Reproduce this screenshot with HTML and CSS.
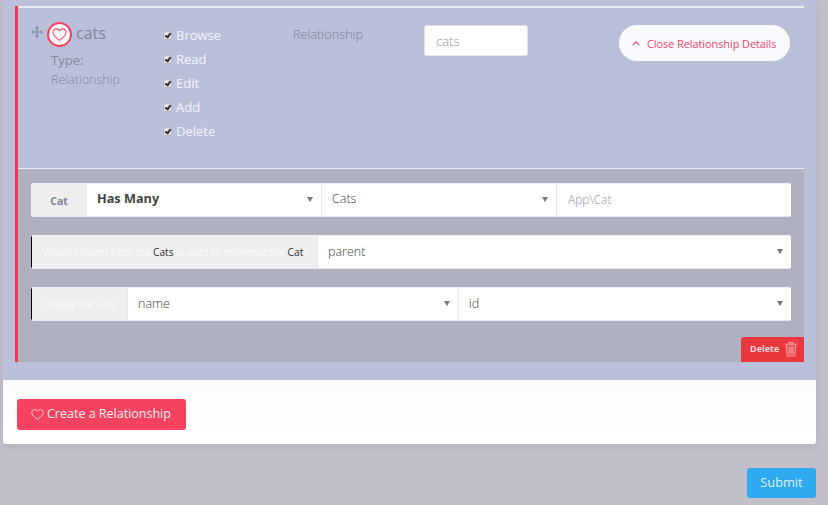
FILE: index.html
```html
<!DOCTYPE html>
<html lang="en">
<head>
    <meta charset="UTF-8">
    <title>Edit Relationship</title>
    <link rel="stylesheet" href="styles.css">
</head>
<body>
    <div class="panel">
        <div class="panel-body">
            <div class="relationship">
                <div class="details">
                    <div class="col-name">
                        <div class="name-line">
                            <svg class="move-icon" viewBox="0 0 12 12"><path d="M6 0L8.200 2.400H6.600V5.400H9.600V3.800L12 6 9.600 8.200V6.600H6.600V9.600H8.200L6 12 3.800 9.600H5.400V6.600H2.400V8.200L0 6 2.400 3.800V5.400H5.400V2.400H3.800Z"/></svg>
                            <span class="heart-badge">
                                <svg viewBox="0 0 16 16"><path d="M8 14.200C3.500 10.800 1 8.200 1 5.500 1 3.500 2.600 2 4.500 2 6 2 7.300 2.800 8 4.100 8.700 2.800 10 2 11.500 2 13.400 2 15 3.500 15 5.500c0 2.700-2.500 5.300-7 8.700z"/></svg>
                            </span>
                            <span class="name">cats</span>
                        </div>
                        <div class="type-label">Type:</div>
                        <div class="type-value">Relationship</div>
                    </div>
                    <div class="col-perms">
                        <div class="perm"><span class="check"></span>Browse</div>
                        <div class="perm"><span class="check"></span>Read</div>
                        <div class="perm"><span class="check"></span>Edit</div>
                        <div class="perm"><span class="check"></span>Add</div>
                        <div class="perm"><span class="check"></span>Delete</div>
                    </div>
                    <div class="col-type">Relationship</div>
                    <input class="col-input" type="text" placeholder="cats">
                    <button class="close-btn">
                        <svg viewBox="0 0 10 6"><path d="M1 5l4-4 4 4"/></svg>
                        Close Relationship Details
                    </button>
                </div>
                <div class="form-area">
                    <div class="input-row">
                        <span class="addon addon-cat">Cat</span>
                        <div class="select strong sel-has-many">Has Many</div>
                        <div class="select sel-cats">Cats</div>
                        <input class="model-input" type="text" placeholder="App\Cat">
                    </div>
                    <div class="input-row">
                        <span class="addon addon-long">Which column from the <b>Cats</b> is used to reference the <b>Cat</b>?</span>
                        <div class="select grow">parent</div>
                    </div>
                    <div class="input-row">
                        <span class="addon addon-long addon-display">Display the Cats</span>
                        <div class="select sel-name">name</div>
                        <div class="select grow">id</div>
                    </div>
                    <div class="delete-bar">
                        <button class="delete-btn">
                            Delete
                            <svg viewBox="0 0 16 18"><path d="M1 3.500h14M5.500 3.500V1.500h5v2M2.500 3.500l1 13.500h9l1-13.500M6 6.500v8M8 6.500v8M10 6.500v8"/></svg>
                        </button>
                    </div>
                </div>
            </div>
        </div>
        <div class="panel-footer">
            <button class="create-btn">
                <svg viewBox="0 0 16 16"><path d="M8 14.200C3.500 10.800 1 8.200 1 5.500 1 3.500 2.600 2 4.500 2 6 2 7.300 2.800 8 4.100 8.700 2.800 10 2 11.500 2 13.400 2 15 3.500 15 5.500c0 2.700-2.500 5.300-7 8.700z"/></svg>
                Create a Relationship
            </button>
        </div>
    </div>
    <div class="actions">
        <button class="submit-btn">Submit</button>
    </div>
</body>
</html>
```

FILE: styles.css
```css
html, body {
    margin: 0;
    padding: 0;
}

body {
    font-family: "Open Sans", sans-serif;
    background-color: #c2bfc9;
    height: 505px;
    overflow: hidden;
}

button {
    font-family: inherit;
    border: none;
    cursor: pointer;
}

.panel {
    margin: 0 12px 0 3px;
    border-radius: 0 0 3px 3px;
    box-shadow: 0 2px 8px rgba(0, 0, 0, 0.08);
}

.panel-body {
    background-color: #bbc0da;
    padding: 6px 12px 18px;
}

.relationship {
    border-left: 3px solid #f5365c;
}

.details {
    display: flex;
    align-items: flex-start;
    height: 160px;
    border-top: 2px solid #e9ebf3;
    border-bottom: 1px solid #e9ebf3;
    box-sizing: content-box;
}

.col-name {
    width: 145px;
    padding: 14px 0 0 13px;
    box-sizing: border-box;
    flex-shrink: 0;
    color: #8a90a5;
}

.name-line {
    display: flex;
    align-items: center;
    height: 25px;
}

.move-icon {
    width: 12px;
    height: 12px;
    fill: #7f88a3;
    margin: 0 4px 5px 0;
}

.heart-badge {
    display: flex;
    align-items: center;
    justify-content: center;
    width: 25px;
    height: 25px;
    box-sizing: border-box;
    background: #fff;
    border: 2px solid #f5435f;
    border-radius: 50%;
}

.heart-badge svg {
    width: 15px;
    height: 15px;
    fill: none;
    stroke: #f5435f;
    stroke-width: 1.1;
}

.name {
    margin: 0 0 3px 4px;
    font-size: 16px;
    color: #7e8599;
}

.type-label {
    margin: 4px 0 0 20px;
    font-size: 13px;
    line-height: 19px;
    color: #858b9f;
}

.type-value {
    margin-left: 20px;
    font-size: 12.500px;
    line-height: 19px;
    font-weight: 300;
    color: #7d8499;
}

.col-perms {
    width: 130px;
    flex-shrink: 0;
    padding-top: 15px;
}

.perm {
    display: flex;
    align-items: center;
    height: 24px;
    font-size: 13px;
    color: #f2f3f8;
}

.check {
    position: relative;
    width: 9px;
    height: 9px;
    margin: 0 4px 0 0;
    background: #e0e0e4;
    border-radius: 2px;
    box-shadow: inset 0 0 0 1px #b4b4bc;
}

.check::after {
    content: "";
    position: absolute;
    left: 3px;
    top: 1px;
    width: 2px;
    height: 4px;
    border: solid #333;
    border-width: 0 2px 2px 0;
    transform: rotate(35deg);
}

.col-type {
    width: 131px;
    flex-shrink: 0;
    padding-top: 18px;
    font-size: 12.700px;
    line-height: 17px;
    font-weight: 300;
    color: #777e92;
}

.col-input {
    width: 104px;
    height: 31px;
    margin-top: 17px;
    padding: 0 11px;
    box-sizing: border-box;
    flex-shrink: 0;
    border: 1px solid #dfe3ee;
    border-radius: 3px;
    background: #fff;
    font-family: inherit;
    font-size: 13px;
    font-weight: 300;
}

.col-input::placeholder,
.model-input::placeholder {
    color: #8f929c;
    opacity: 1;
}

.close-btn {
    display: flex;
    align-items: center;
    gap: 7px;
    width: 171px;
    height: 36px;
    margin: 17px 0 0 91px;
    padding: 0 0 0 13px;
    flex-shrink: 0;
    border-radius: 18px;
    background: #f8f9fc;
    color: #f5436a;
    font-size: 10.800px;
    white-space: nowrap;
}

.close-btn svg {
    width: 8px;
    height: 5px;
    fill: none;
    stroke: #f5436a;
    stroke-width: 1.4;
}

.form-area {
    display: flex;
    flex-direction: column;
    background-color: #b0b1c0;
    padding-top: 14px;
}

.input-row {
    display: flex;
    width: 760px;
    height: 34px;
    margin: 0 0 18px 13px;
    box-sizing: border-box;
    border-radius: 2px;
    background: #fff;
    border-bottom: 1px solid #e6e7ec;
    border-top: 1px solid #eee;
    font-size: 12.500px;
    overflow: hidden;
}

.addon {
    display: flex;
    align-items: center;
    background: #eee;
    white-space: pre;
    flex-shrink: 0;
    box-sizing: border-box;
}

.addon-cat {
    width: 56px;
    justify-content: center;
    padding-top: 2px;
    font-size: 10.500px;
    font-weight: 700;
    color: #7d8598;
}

.addon-long {
    width: 286px;
    padding-left: 11px;
    border-left: 1px solid #000;
    font-size: 10.200px;
    font-weight: 300;
    color: #fff;
}

.addon-long b {
    font-weight: 400;
    color: #333;
}

.addon-display {
    width: 96px;
}

.select {
    position: relative;
    display: flex;
    align-items: center;
    box-sizing: border-box;
    padding: 0 10px 1px;
    border-left: 1px solid #e6e7ec;
    font-weight: 300;
    color: #444;
    flex-shrink: 0;
}

.select::after {
    content: "";
    position: absolute;
    right: 8px;
    top: 13px;
    border: solid transparent;
    border-width: 5px 3.500px 0;
    border-top-color: #777;
}

.grow {
    flex: 1;
}

.strong {
    padding-bottom: 4px;
    font-size: 12.700px;
    font-weight: 700;
    color: #444;
}

.sel-has-many {
    width: 234px;
    border-left: none;
}

.sel-cats {
    width: 235px;
    padding-bottom: 3px;
}

.sel-name {
    width: 331px;
}

.model-input {
    flex: 1;
    min-width: 0;
    padding: 0 11px 2px;
    border: none;
    border-left: 1px solid #e6e7ec;
    font-family: inherit;
    font-size: 12px;
    font-weight: 300;
}

.delete-bar {
    display: flex;
    justify-content: flex-end;
    margin-top: -2px;
}

.delete-btn {
    display: flex;
    align-items: center;
    gap: 5px;
    width: 63px;
    height: 25px;
    padding: 0 0 2px 9px;
    border-radius: 3px 0 0 0;
    background: #ea383e;
    color: #f5d5d7;
    font-size: 9px;
    font-weight: 700;
}

.delete-btn svg {
    width: 14px;
    height: 16px;
    fill: rgba(255, 255, 255, 0.15);
    stroke: #f0a0a4;
    stroke-width: 1.1;
}

.panel-footer {
    height: 64px;
    padding: 19px 14px 0;
    box-sizing: border-box;
    background: linear-gradient(#fcfcfc, #fff);
    border-radius: 0 0 3px 3px;
}

.create-btn {
    display: flex;
    align-items: center;
    gap: 3px;
    width: 169px;
    height: 31px;
    padding: 0 0 2px 14px;
    border-radius: 3px;
    background: #f5435f;
    color: #fdeef0;
    font-size: 12.500px;
}

.create-btn svg {
    width: 13px;
    height: 13px;
    margin-top: 2px;
    fill: none;
    stroke: #fdeef0;
    stroke-width: 1;
}

.actions {
    display: flex;
    justify-content: flex-end;
    padding: 24px 12px 0 0;
}

.submit-btn {
    width: 69px;
    height: 30px;
    padding: 0 0 2px;
    border-radius: 3px;
    background: #2eaaf0;
    color: #dff1fc;
    font-size: 12.800px;
}
```
